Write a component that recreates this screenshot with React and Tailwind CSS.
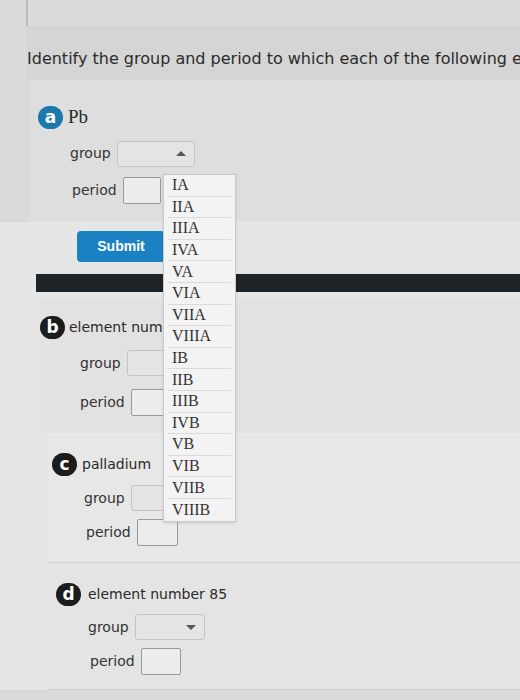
import React from "react";

const groups = ["IA", "IIA", "IIIA", "IVA", "VA", "VIA", "VIIA", "VIIIA", "IB", "IIB", "IIIB", "IVB", "VB", "VIB", "VIIB", "VIIIB"];

const sans = { fontFamily: '"DejaVu Sans", Verdana, sans-serif' };
const serif = { fontFamily: '"Liberation Serif", "Times New Roman", serif' };

function Badge({ letter, blue }) {
  return (
    <span
      className={
        "flex h-[23px] w-[25px] items-center justify-center rounded-full text-[17px] font-bold leading-none text-white " +
        (blue ? "bg-[#1b79ae]" : "bg-[#1c1c1c]")
      }
      style={sans}
    >
      {letter}
    </span>
  );
}

function SelectBox({ width, up }) {
  return (
    <div className={"flex h-[26px] items-center justify-end rounded-[3px] border border-[#c4c4c4] bg-[#e4e4e4] pr-[8px] " + width}>
      {up === undefined ? null : up ? (
        <span className="h-0 w-0 border-x-[5px] border-b-[5px] border-x-transparent border-b-[#555]" />
      ) : (
        <span className="h-0 w-0 border-x-[5px] border-t-[5px] border-x-transparent border-t-[#555]" />
      )}
    </div>
  );
}

function InputBox({ width }) {
  return <div className={"h-[27px] rounded-[2px] border border-[#9a9a9a] bg-[#ececec] " + width} />;
}

function Row({ label, children, labelPad }) {
  return (
    <div className="flex items-center gap-[6px]">
      <span className={"text-[14px] text-[#333] " + labelPad} style={sans}>
        {label}
      </span>
      {children}
    </div>
  );
}

export default function App() {
  return (
    <div className="relative h-[700px] w-[520px] overflow-hidden bg-[#dadada]">
      <div className="ml-[26px] h-[26px] border-l-2 border-[#bcbcbc]" />
      <div className="ml-[27px] flex h-[54px] items-center bg-[#d5d5d5] pt-[12px] whitespace-nowrap">
        <span className="text-[16px] text-[#2b2b2b]" style={sans}>
          Identify the group and period to which each of the following elements belongs.
        </span>
      </div>

      <div className="ml-[30px] h-[142px] bg-[#dedede] pl-[8px] pt-[23px]">
        <div className="flex items-center gap-[5px]">
          <Badge letter="a" blue />
          <span className="text-[19px] text-[#2a2a2a]" style={serif}>Pb</span>
        </div>
        <div className="mt-[9px] pl-[32px]">
          <Row label="group">
            <SelectBox width="w-[78px]" up />
          </Row>
          <div className="mt-[10px]">
            <Row label="period" labelPad="pl-[2px]">
              <InputBox width="w-[38px]" />
            </Row>
          </div>
        </div>
      </div>

      <div className="bg-[#e6e6e6] pt-[9px]">
        <button
          type="button"
          className="ml-[77px] h-[31px] w-[88px] rounded-[4px] bg-[#1a82c2] text-[14px] font-semibold text-white"
          style={{ fontFamily: '"Liberation Sans", Arial, sans-serif' }}
        >
          Submit
        </button>
        <div className="ml-[36px] mt-[12px] h-[18px] bg-[#1e2327]" />
        <div className="h-[8px]" />

        <div className="ml-[40px] h-[133px] bg-[#e2e2e2] pt-[16px]">
          <div className="flex items-center gap-[4px]">
            <Badge letter="b" />
            <span className="text-[14px] text-[#2a2a2a]" style={sans}>element number 82</span>
          </div>
          <div className="mt-[11px] pl-[40px]">
            <Row label="group">
              <SelectBox width="w-[44px]" />
            </Row>
            <div className="mt-[13px]">
              <Row label="period">
                <InputBox width="w-[36px]" />
              </Row>
            </div>
          </div>
        </div>

        <div className="ml-[47px] h-[130px] border-b border-[#cfcfcf] bg-[#e7e7e7] pt-[20px]">
          <div className="flex items-center gap-[5px] pl-[5px]">
            <Badge letter="c" />
            <span className="text-[14px] text-[#2a2a2a]" style={sans}>palladium</span>
          </div>
          <div className="mt-[9px] pl-[37px]">
            <Row label="group">
              <SelectBox width="w-[46px]" />
            </Row>
            <div className="mt-[8px]">
              <Row label="period" labelPad="pl-[2px]">
                <InputBox width="w-[41px]" />
              </Row>
            </div>
          </div>
        </div>

        <div className="ml-[48px] h-[127px] border-b border-[#cfcfcf] bg-[#e4e4e4] pt-[20px]">
          <div className="flex items-center gap-[7px] pl-[8px]">
            <Badge letter="d" />
            <span className="text-[14px] text-[#2a2a2a]" style={sans}>element number 85</span>
          </div>
          <div className="mt-[8px] pl-[40px]">
            <Row label="group">
              <SelectBox width="w-[70px]" up={false} />
            </Row>
            <div className="mt-[8px]">
              <Row label="period" labelPad="pl-[2px]">
                <InputBox width="w-[40px]" />
              </Row>
            </div>
          </div>
        </div>
      </div>

      <ul className="absolute left-[163px] top-[174px] w-[73px] border border-[#cacaca] bg-[#f3f3f3] px-[4px] shadow-sm">
        {groups.map((g, i) => (
          <li
            key={g}
            className={"flex h-[21.6px] items-center pl-[4px] text-[16px] leading-none text-[#333] " + (i < groups.length - 1 ? "border-b border-[#dadada]" : "")}
            style={serif}
          >
            {g}
          </li>
        ))}
      </ul>
    </div>
  );
}
